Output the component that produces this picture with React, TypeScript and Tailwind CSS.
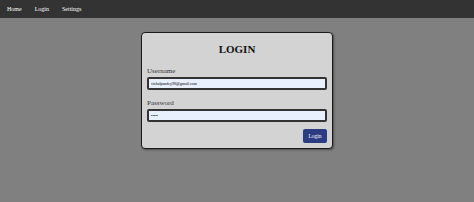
import React, { useState } from 'react';

const App: React.FC = () => {
  const [username, setUsername] = useState('vishalpandey98@gmail.com');
  const [password, setPassword] = useState('12345');

  return (
    <div className="min-h-screen w-full bg-[#808080] font-['Liberation_Serif',serif]">
      <nav className="flex h-[18px] items-center gap-[13px] bg-[#333333] px-[7px] text-[6px] text-white">
        <a href="#">Home</a>
        <a href="#">Login</a>
        <a href="#">Settings</a>
      </nav>
      <div className="flex justify-center pt-[14px]">
        <form
          onSubmit={(e) => e.preventDefault()}
          className="flex h-[117px] w-[192px] flex-col rounded-[4px] border border-[#1a1a1a] bg-[#d3d3d3] px-[5px] shadow-[1px_1px_2px_rgba(0,0,0,0.4)]"
        >
          <h2 className="mt-[10px] text-center text-[11px] leading-[12px] font-bold text-[#111]">LOGIN</h2>
          <label className="mt-[12px] text-[7px] leading-[8px] text-[#333]">Username</label>
          <input
            type="text"
            value={username}
            onChange={(e) => setUsername(e.target.value)}
            className="mt-[2px] h-[13px] w-full rounded-[2px] border-2 border-[#333] bg-[#e8f0fe] px-[2px] text-[4px] text-black outline-none"
          />
          <label className="mt-[9px] text-[7px] leading-[8px] text-[#333]">Password</label>
          <input
            type="password"
            value={password}
            onChange={(e) => setPassword(e.target.value)}
            className="mt-[2px] h-[13px] w-full rounded-[2px] border-2 border-[#333] bg-[#e8f0fe] px-[2px] text-[4px] text-black outline-none"
          />
          <div className="mt-[7px] flex justify-end">
            <button
              type="submit"
              className="h-[14px] w-[24px] rounded-[2px] bg-[#2c3c82] text-[5.5px] text-white"
            >
              Login
            </button>
          </div>
        </form>
      </div>
    </div>
  );
};

export default App;
